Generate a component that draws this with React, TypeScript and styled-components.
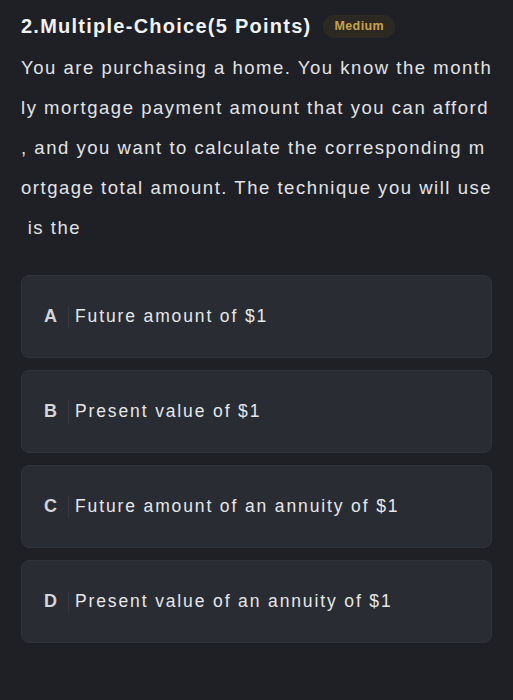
import React from "react";
import styled, { createGlobalStyle } from "styled-components";

const Global = createGlobalStyle`
  html, body { margin: 0; padding: 0; background: #1e2025; }
  body { font-family: "Liberation Sans", Arial, sans-serif; -webkit-font-smoothing: antialiased; }
`;

const Page = styled.div`
  width: 513px;
  min-height: 700px;
  box-sizing: border-box;
  padding: 12px 21px 0 21px;
  background: #1e2025;
  color: #e4e5e7;
`;

const Header = styled.div`
  display: flex;
  align-items: center;
  gap: 12px;
  height: 28px;
`;

const Title = styled.h2`
  margin: 0;
  font-size: 20px;
  font-weight: 700;
  color: #f2f2f3;
  letter-spacing: 1.25px;
`;

const Badge = styled.span`
  display: inline-flex;
  align-items: center;
  height: 23px;
  padding: 0 11px;
  border-radius: 12px;
  background: #2c2923;
  color: #c9a24c;
  font-size: 12.5px;
  font-weight: 700;
  letter-spacing: 0.4px;
`;

const Question = styled.p`
  margin: 8px 0 0 0;
  font-size: 18.5px;
  line-height: 40px;
  letter-spacing: 1.53px;
  color: #e2e3e5;
`;

const Line = styled.span`
  display: block;
  white-space: pre;
`;

const Options = styled.div`
  display: flex;
  flex-direction: column;
  gap: 12px;
  margin-top: 27px;
`;

const Option = styled.div`
  display: flex;
  align-items: center;
  height: 83px;
  box-sizing: border-box;
  padding: 0 0 0 22px;
  border: 1px solid #2f3239;
  border-radius: 8px;
  background: #292c33;
`;

const Letter = styled.span`
  width: 24px;
  font-size: 18px;
  font-weight: 700;
  color: #d3d5d8;
`;

const Divider = styled.span`
  width: 1px;
  height: 22px;
  margin: 0 6px 0 0;
  background: #34373e;
`;

const OptionText = styled.span`
  font-size: 17.5px;
  letter-spacing: 1.87px;
  color: #e6e7e9;
`;

const lines = [
  "You are purchasing a home. You know the month",
  "ly mortgage payment amount that you can afford",
  ", and you want to calculate the corresponding m",
  "ortgage total amount. The technique you will use",
  " is the",
];

const options = [
  { key: "A", text: "Future amount of $1" },
  { key: "B", text: "Present value of $1" },
  { key: "C", text: "Future amount of an annuity of $1" },
  { key: "D", text: "Present value of an annuity of $1" },
];

export default function App() {
  return (
    <Page>
      <Global />
      <Header>
        <Title>2.Multiple-Choice(5 Points)</Title>
        <Badge>Medium</Badge>
      </Header>
      <Question>
        {lines.map((l, i) => (
          <Line key={i}>{l}</Line>
        ))}
      </Question>
      <Options>
        {options.map((o) => (
          <Option key={o.key}>
            <Letter>{o.key}</Letter>
            <Divider />
            <OptionText>{o.text}</OptionText>
          </Option>
        ))}
      </Options>
    </Page>
  );
}
